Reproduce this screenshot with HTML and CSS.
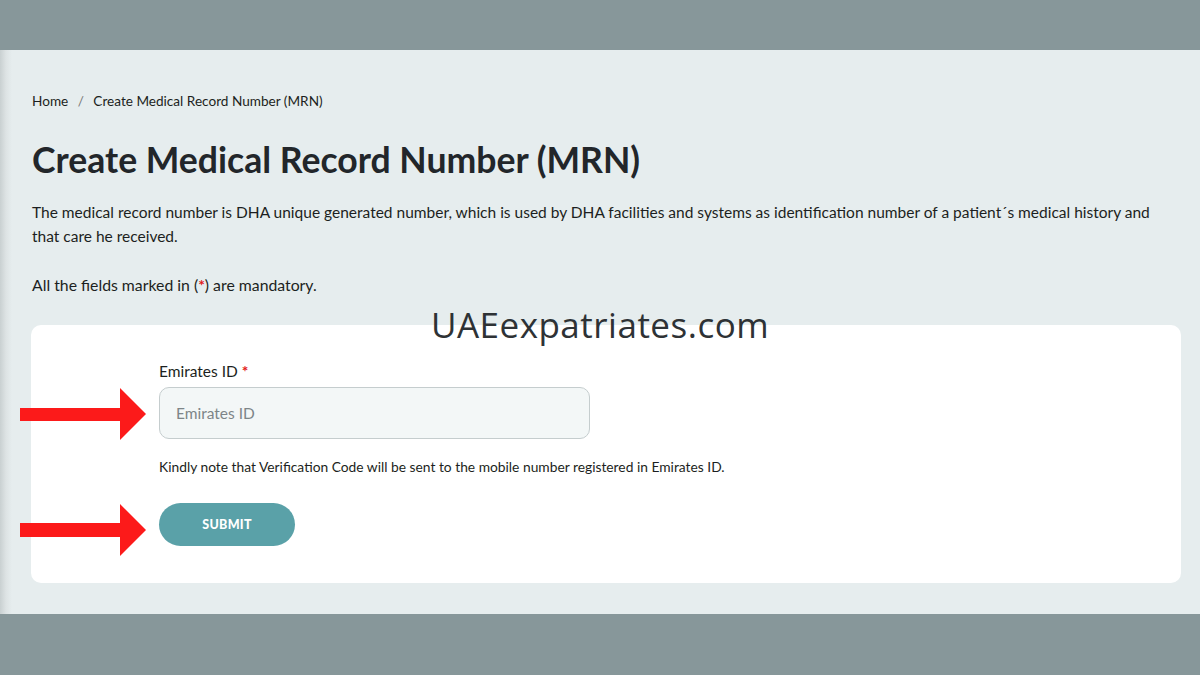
FILE: index.html
```html
<!DOCTYPE html>
<html lang="en">
<head>
    <meta charset="UTF-8">
    <meta name="viewport" content="width=device-width, initial-scale=1.0">
    <title>Create Medical Record Number (MRN)</title>
    <link rel="stylesheet" href="styles.css">
</head>
<body>

    <div class="top-band"></div>

    <div class="page">
        <div class="breadcrumb">
            <a href="#">Home</a>
            <span class="sep">/</span>
            <span>Create Medical Record Number (MRN)</span>
        </div>

        <h1>Create Medical Record Number (MRN)</h1>

        <p class="intro">The medical record number is DHA unique generated number, which is used by DHA facilities and systems as identification number of a patient´s medical history and that care he received.</p>

        <p class="mandatory">All the fields marked in (<span class="req">*</span>) are mandatory.</p>

        <div class="card">
            <label for="eid">Emirates ID <span class="req">*</span></label>
            <input type="text" id="eid" placeholder="Emirates ID">
            <p class="note">Kindly note that Verification Code will be sent to the mobile number registered in Emirates ID.</p>
            <button>SUBMIT</button>
        </div>

        <div class="watermark">UAEexpatriates.com</div>

        <svg class="arrow arrow-one" width="126" height="52" viewBox="0 0 126 52">
            <polygon points="0,20 100,20 100,0 126,26 100,52 100,33 0,33" fill="#fc1a1a"/>
        </svg>
        <svg class="arrow arrow-two" width="126" height="52" viewBox="0 0 126 52">
            <polygon points="0,19 100,19 100,0 126,26 100,52 100,33 0,33" fill="#fc1a1a"/>
        </svg>
    </div>

    <div class="bottom-band"></div>

</body>
</html>
```

FILE: styles.css
```css
body {
    margin: 0;
    padding: 0;
    font-family: Lato, "Open Sans", sans-serif;
    color: #1c1f21;
    background: #87979a;
}
.top-band {
    height: 50px;
    background: #87979a;
}
.bottom-band {
    height: 61px;
    background: #87979a;
}
.page {
    position: relative;
    height: 564px;
    box-sizing: border-box;
    padding: 41px 19px 0 31px;
    background: linear-gradient(to right, #c9d0d1 0, #dde3e4 6px, #e6edee 12px);
}
.breadcrumb {
    padding-left: 1px;
    font-size: 13.6px;
    line-height: 20px;
    color: #1c1f21;
}
.breadcrumb a {
    color: #1c1f21;
    text-decoration: none;
}
.breadcrumb .sep {
    color: #777;
    margin: 0 6px;
}
h1 {
    margin: 28px 0 0 1px;
    font-size: 35.6px;
    line-height: 42px;
    font-weight: 700;
    color: #22262a;
}
.intro {
    margin: 19px 0 0 1px;
    font-size: 15.5px;
    line-height: 24px;
    max-width: 1130px;
}
.mandatory {
    margin: 25px 0 0 1px;
    font-size: 15.8px;
    line-height: 24px;
}
.req {
    color: #e31b1b;
    font-weight: 700;
}
.card {
    margin-top: 28px;
    background: white;
    border-radius: 10px;
    padding: 35px 0 37px 128px;
    height: 258px;
    box-sizing: border-box;
}
.card label {
    display: block;
    font-size: 15.5px;
    line-height: 22px;
}
.card input {
    display: block;
    margin-top: 5px;
    width: 431px;
    height: 52px;
    box-sizing: border-box;
    border: 1px solid #c5cdce;
    border-radius: 10px;
    background: #f3f7f7;
    padding: 0 16px;
    font-family: Lato, sans-serif;
    font-size: 15.5px;
    color: #1c1f21;
}
.card input::placeholder {
    color: #7d8588;
}
.note {
    margin: 18px 0 0 0;
    font-size: 13.8px;
    line-height: 20px;
}
.card button {
    margin-top: 26px;
    width: 136px;
    height: 43px;
    border: none;
    border-radius: 22px;
    background: #5aa1a8;
    color: white;
    font-family: Lato, sans-serif;
    font-weight: 900;
    font-size: 12.5px;
    letter-spacing: 0.3px;
    cursor: pointer;
}
.watermark {
    position: absolute;
    left: 0;
    right: 0;
    top: 251px;
    text-align: center;
    font-family: "Open Sans", sans-serif;
    font-size: 35px;
    color: #2e3235;
    letter-spacing: 0.5px;
}
.arrow {
    position: absolute;
    left: 20px;
}
.arrow-one {
    top: 338px;
}
.arrow-two {
    top: 454px;
}
```
